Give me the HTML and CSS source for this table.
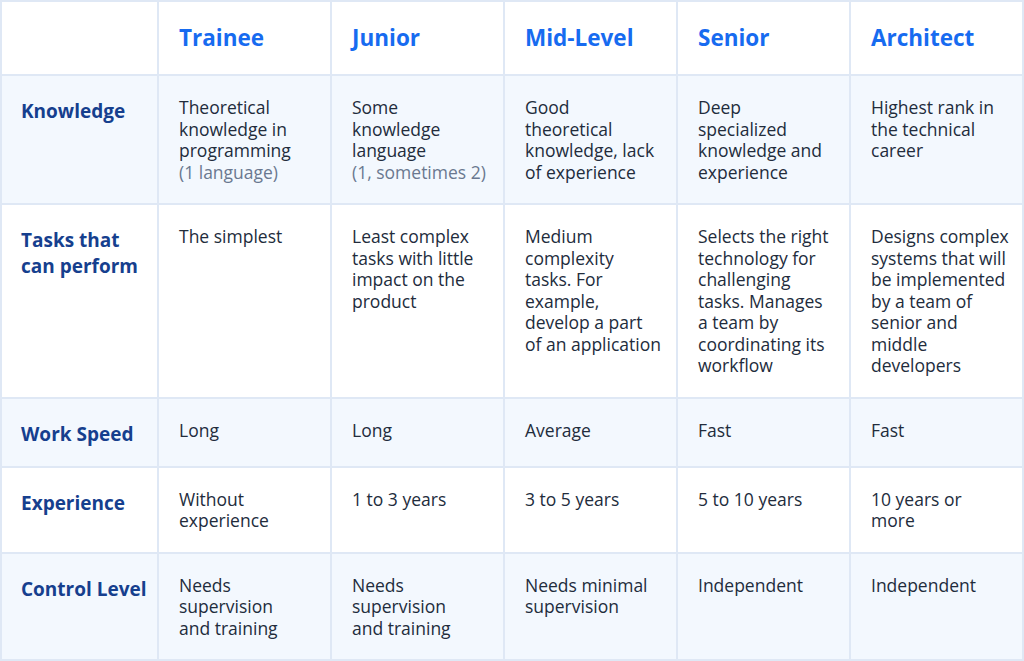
FILE: index.html
```html
<!DOCTYPE html>
<html lang="en">
<head>
<meta charset="utf-8">
<title>Developer levels</title>
<link rel="stylesheet" href="styles.css">
</head>
<body>
<div class="grid">
  <div class="cell head"></div>
  <div class="cell head"><span class="level">Trainee</span></div>
  <div class="cell head"><span class="level">Junior</span></div>
  <div class="cell head"><span class="level">Mid-Level</span></div>
  <div class="cell head"><span class="level">Senior</span></div>
  <div class="cell head"><span class="level">Architect</span></div>

  <div class="cell alt label">Knowledge</div>
  <div class="cell alt">Theoretical<br>knowledge in<br>programming<br><span class="note">(1 language)</span></div>
  <div class="cell alt">Some<br>knowledge<br>language<br><span class="note">(1, sometimes 2)</span></div>
  <div class="cell alt">Good<br>theoretical<br>knowledge, lack<br>of experience</div>
  <div class="cell alt">Deep<br>specialized<br>knowledge and<br>experience</div>
  <div class="cell alt">Highest rank in<br>the technical<br>career</div>

  <div class="cell label">Tasks that<br>can perform</div>
  <div class="cell">The simplest</div>
  <div class="cell">Least complex<br>tasks with little<br>impact on the<br>product</div>
  <div class="cell">Medium<br>complexity<br>tasks. For<br>example,<br>develop a part<br>of an application</div>
  <div class="cell">Selects the right<br>technology for<br>challenging<br>tasks. Manages<br>a team by<br>coordinating its<br>workflow</div>
  <div class="cell">Designs complex<br>systems that will<br>be implemented<br>by a team of<br>senior and<br>middle<br>developers</div>

  <div class="cell alt label">Work Speed</div>
  <div class="cell alt">Long</div>
  <div class="cell alt">Long</div>
  <div class="cell alt">Average</div>
  <div class="cell alt">Fast</div>
  <div class="cell alt">Fast</div>

  <div class="cell label">Experience</div>
  <div class="cell">Without<br>experience</div>
  <div class="cell">1 to 3 years</div>
  <div class="cell">3 to 5 years</div>
  <div class="cell">5 to 10 years</div>
  <div class="cell">10 years or<br>more</div>

  <div class="cell alt label">Control Level</div>
  <div class="cell alt">Needs<br>supervision<br>and training</div>
  <div class="cell alt">Needs<br>supervision<br>and training</div>
  <div class="cell alt">Needs minimal<br>supervision</div>
  <div class="cell alt">Independent</div>
  <div class="cell alt">Independent</div>
</div>
</body>
</html>
```
FILE: styles.css
```css
html, body {
  margin: 0;
  padding: 0;
  background: #ffffff;
}
body {
  font-family: "Open Sans", "Noto Sans", sans-serif;
  width: 1024px;
  height: 661px;
  overflow: hidden;
}
.grid {
  display: grid;
  grid-template-columns: 155px repeat(5, 171px);
  gap: 2px;
  padding: 2px;
  background: #dfe8f5;
  width: 1024px;
  box-sizing: border-box;
}
.cell {
  background: #ffffff;
  padding: 21px 8px 20px 20px;
  font-size: 17.5px;
  line-height: 21.5px;
  color: #222c3c;
  white-space: nowrap;
}
.cell.alt {
  background: #f3f8fe;
}
.cell.head {
  padding: 21px 8px 20px 20px;
  line-height: 30px;
}
.level {
  font-size: 22.5px;
  font-weight: 700;
  color: #176bf0;
}
.cell.label {
  padding: 22px 4px 19px 19px;
  font-size: 19px;
  line-height: 26px;
  font-weight: 700;
  color: #163f8e;
}
.note {
  color: #6a7890;
}
```
